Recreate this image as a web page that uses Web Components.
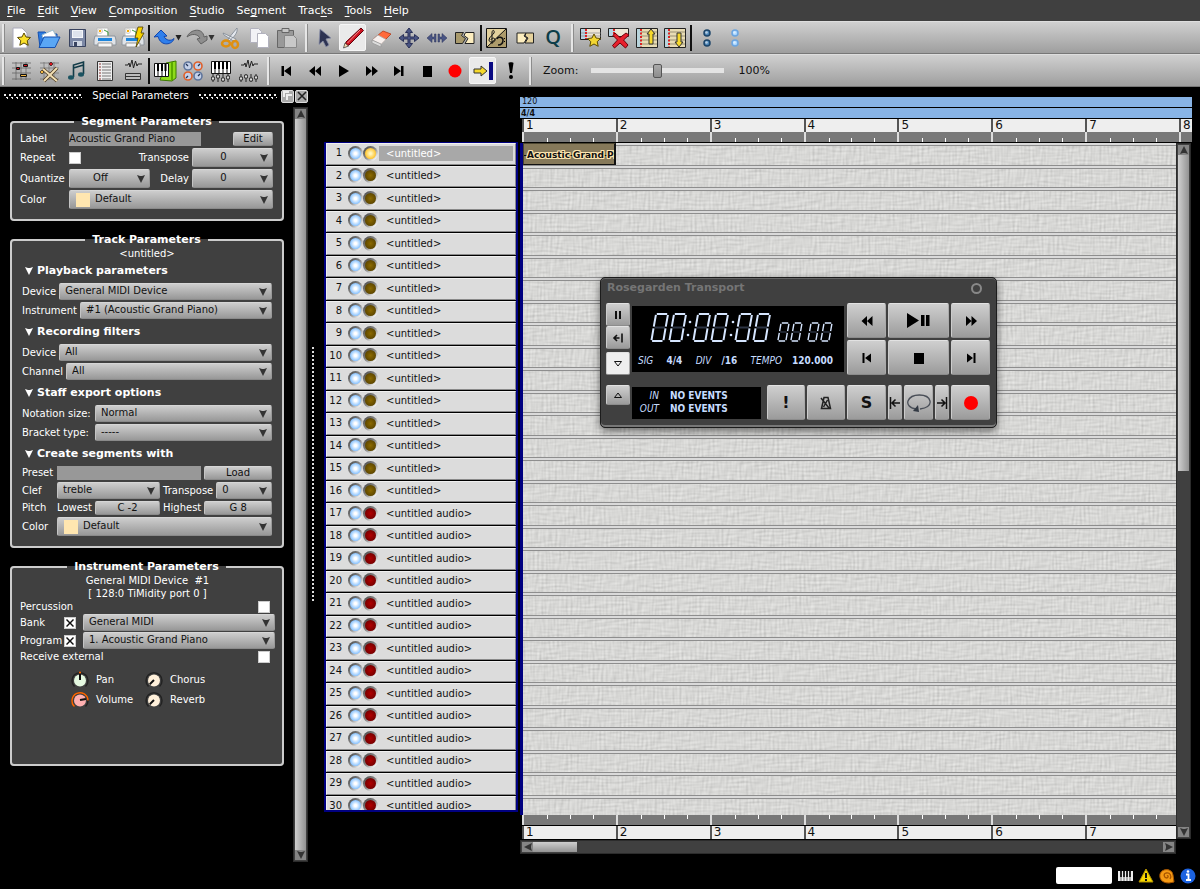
<!DOCTYPE html>
<html lang="en">
<head>
<meta charset="utf-8">
<title>Rosegarden</title>
<style>
  html, body { margin: 0; background: #000; }
  body { font: 10px/14px "DejaVu Sans", sans-serif; color: #fff; }
</style>
</head>
<body>
<rg-app></rg-app>

<script>
const define = (name, html, init) => {
  const tpl = document.createElement('template');
  tpl.innerHTML = html;
  customElements.define(name, class extends HTMLElement {
    constructor() {
      super();
      this.attachShadow({ mode: 'open' });
    }
    connectedCallback() {
      if (this.shadowRoot.childNodes.length) return;
      this.shadowRoot.appendChild(tpl.content.cloneNode(true));
      if (init) init(this, this.shadowRoot);
    }
  });
};
const svg = (body, w = 24, h = 24, extra = '') =>
  `<svg width="${w}" height="${h}" viewBox="0 0 ${w} ${h}" aria-hidden="true" ${extra}>${body}</svg>`;

/* ---------- icons, 24 x 24 ---------- */
const printer = `<path d="M4 2h11v9H4z" fill="#fff" stroke="#bbb"/><circle cx="7" cy="5" r="2.5" fill="#fff" stroke="#ccc"/><circle cx="7" cy="5" r="1.2" fill="#f6a800"/><path d="M11 4l4 2v4" stroke="#3a9a3a" fill="none"/><path d="M2 10h20l1 4v5H1v-5z" fill="#dfe3e8" stroke="#8d949c"/><path d="M5 12h14v3H5z" fill="#1d86dd"/><path d="M5 17h14v4H5z" fill="#f6f6f6" stroke="#999"/>`;
const star = 'l2 4 4.500.5-3.300 3.200 1 4.600-4.200-2.300-4.200 2.300 1-4.600-3.300-3.200 4.500-.5z';
const staffBox = `<path d="M1.500 2.500h21v19h-21z" fill="#e8dcb4" stroke="#222"/><path d="M2 6h20M2 10h20M2 14h20M2 18h20" stroke="#77705a" stroke-width=".7"/><path d="M2 3h4v18H2z" fill="#b8d4dc"/><path d="M6 3v18" stroke="#d22" stroke-width="2" stroke-dasharray="2 1.500"/>`;
const faders = '<path d="M4 15v8M9 15v8M14 15v8M19 15v8" stroke="#222"/><path d="M2.500 18h3v3h-3zM7.500 16h3v3h-3zM12.500 19h3v3h-3zM17.500 17h3v3h-3z" fill="#ddd" stroke="#222" stroke-width=".8"/>';
const wave = (y) => `<path d="M4 ${y}h3l1-2 1 4 2-7 1.500 8 2-7 1.500 5 1-2h4" fill="none" stroke="#222"/>`;
const dialFace = (x, y, c, r) => `<circle cx="${x}" cy="${y}" r="4" fill="#c4d0e8" stroke="${c}" stroke-width="1.600"/><path d="M${x} ${y}l${r}" stroke="#235" stroke-width="1.200"/>`;
const tmOut = (y, c, f) => `<circle cx="12" cy="${y}" r="3" fill="${c}" stroke="${f}" stroke-width="1.500"/><circle cx="11.500" cy="${y - .5}" r="1.300" fill="#fff" opacity=".6"/>`;

const ICONS = {
  new: `<path d="M4 2h9l5 5v15H4z" fill="#fff" stroke="#aab"/><path d="M16 6${star}" transform="translate(-1 1)" fill="#fbe12c" stroke="#5c4b00"/>`,
  open: `<path d="M3 21L1 6h7l2 2h10v4" fill="#2c7be0" stroke="#1551b0"/><path d="M5 9l11-5 4 8H6z" fill="#fff" stroke="#9bc"/><path d="M2 21.500L7 11h16l-5 10.500z" fill="#5aa7f5" stroke="#1551b0"/>`,
  save: `<path d="M4.500 3.500h16v17h-16z" fill="#7d89a6" stroke="#39435f"/><path d="M7 4h11v8H7z" fill="#f4f6fa"/><path d="M8 6h9M8 8h9M8 10h9" stroke="#b6c0d2" stroke-width=".7"/><path d="M8 15h9v5H8z" fill="#cfd6e2"/><path d="M9 16h3v4H9z" fill="#39435f"/>`,
  print: printer,
  preview: printer + `<path d="M17 1h5l-2 6h3l-8 14 2-9h-3z" fill="#f8d200" stroke="#4a3b00" stroke-width=".8"/>`,
  undo: `<path d="M1 11l7-7 6 6-3 .5c2 4 7 5 10 2-1 6-13 9-16-2z" fill="#2f7fec" stroke="#1246ad"/><path d="M22.500 9h6l-3 5.500z" fill="#222"/>`,
  redo: `<path d="M21 14l-6 4-4-5 3-.8C12 8 6 7 1 11 4 3 17 1 18 11l3-1z" fill="#8e8e8e" stroke="#626262"/><path d="M22.500 9h6l-3 5.500z" fill="#333"/>`,
  cut: `<path d="M18 2c1 5-3 9-8 13l-1-2zM4 7l13 6-1 3L5 9z" fill="#e4e8ee" stroke="#7c8590" stroke-width=".8"/><ellipse cx="7" cy="17.500" rx="4" ry="3" fill="none" stroke="#e09010" stroke-width="2.500"/><ellipse cx="16" cy="18.500" rx="3" ry="3.500" fill="none" stroke="#e09010" stroke-width="2.500"/>`,
  copy: `<path d="M3.500 2.500h8l3 3v11h-11z" fill="#f2f2f6" stroke="#b2b2be"/><path d="M10.500 7.500h8l3 3v11h-11z" fill="#fff" stroke="#b2b2be"/>`,
  paste: `<path d="M2.500 4.500h16v17h-16z" fill="#999" stroke="#666"/><path d="M7 2.500h7v4H7z" fill="#c6c6c6" stroke="#666"/><path d="M9.500 9.500h9l3 3v9h-12z" fill="#c8c8c8" stroke="#888"/>`,
  select: `<path d="M7 3l11 9-5 1 3 6-3 2-3-6-4 3.500z" fill="#2d3352" stroke="#8a8fa8" stroke-width=".8"/>`,
  draw: `<path d="M20 2l2.500 2.500L8 19l-4 1.500 1-4.500z" fill="#cf1422" stroke="#5e0008"/><path d="M19 4L6.500 17" stroke="#f58a8a"/><path d="M2.500 22l1.500-5 3.500 3z" fill="#f8dcb0" stroke="#333" stroke-width=".7"/>`,
  erase: `<path d="M3 14L14 5l8 3-10 10z" fill="#ff6a3c" stroke="#b23a18" stroke-width=".8"/><path d="M3 14l6-5 8 4.500-5 5z" fill="#f6f0ee" stroke="#aaa" stroke-width=".8"/><path d="M3 14v3l9 4v-3z" fill="#ddd" stroke="#999" stroke-width=".8"/>`,
  move: `<path d="M12 2l3.500 4.500H13V11h4.500V8.500L22 12l-4.500 3.500V13H13v4.500h2.500L12 22l-3.500-4.500H11V13H6.500v2.500L2 12l4.500-3.500V11H11V6.500H8.500z" fill="#4a5584" stroke="#2a3158"/>`,
  resize: `<path d="M2 12l5-4.500V11h2.500V8H11v8H9.500v-3H7v3.500zM22 12l-5-4.500V11h-2.500V8H13v8h1.500v-3H17v3.500z" fill="#4a5584" stroke="#2a3158" stroke-width=".5"/>`,
  split: `<path d="M2.500 6.500h8l-2 3 4 3-3 5H2.500z" fill="#a99a6c" stroke="#222"/><path d="M12.500 6.500h8.500v11h-9l3-5-4-3z" fill="#fdeec0" stroke="#222"/>`,
  notation: `<path d="M1.500 2.500h20v19h-20z" fill="#e2d09c" stroke="#111"/><path d="M21 3v18H2z" fill="#ad9b6b"/><path d="M2 21L21 3" stroke="#111"/><path d="M7 18V7c0-4 3-3 2 0-1 2-5 4-5 7 0 3 6 3 6 0s-4-2-4 0" fill="none" stroke="#111"/><path d="M12 13c1-3 6-2 6 1 0 3-2 5-5 5" fill="none" stroke="#111" stroke-width="1.500"/><path d="M19 12h1v1h-1zM19 15h1v1h-1z"/>`,
  splitb: `<path d="M4 7h9l-2 3 3 2-3 5H4z" fill="#fdeec0" stroke="#222"/><path d="M13 7h7.500v10H12l3-5-3-2z" fill="#e6d29c" stroke="#222"/>`,
  quant: `<text x="12" y="18" text-anchor="middle" font-family="Open Sans, sans-serif" font-weight="600" font-size="20" fill="#0d3d49">Q</text>`,
  addtrack: `<path d="M1.500 2.500h20v11h-20z" fill="#eee6d4" stroke="#222"/><path d="M2 3h6v10H2z" fill="#b6d4e2"/><path d="M2 7h20M2 10h20" stroke="#888" stroke-width=".7"/><path d="M7 3v10" stroke="#d22" stroke-dasharray="2 1" stroke-width="2"/><path d="M15 8${star}" fill="#f3d631" stroke="#5c4b00"/>`,
  deltrack: `<path d="M1.500 2.500h20v8h-20z" fill="#eee6d4" stroke="#222"/><path d="M2 3h6v7H2z" fill="#b6d4e2"/><path d="M7 3v7" stroke="#d22" stroke-dasharray="2 1" stroke-width="2"/><path d="M8 7l5 4.500L19 7l3 2-5.500 5 4.500 5-2.500 3-5.500-5-5.500 5-2-2.500 5-5.500-4.500-4.500z" fill="#e8202c" stroke="#6e0008"/>`,
  trackup: staffBox + `<path d="M16 3l4 5h-2v10h-4V8h-2z" fill="#f6d92c" stroke="#333"/>`,
  trackdown: staffBox + `<path d="M16 21l4-5h-2V7h-4v9h-2z" fill="#f6d92c" stroke="#333"/>`,
  dotsdark: tmOut(7, '#4d86b8', '#1c4468') + tmOut(17, '#4d86b8', '#1c4468'),
  dotslight: tmOut(7, '#a9d6ff', '#6ba5e0') + tmOut(17, '#a9d6ff', '#6ba5e0'),
  matrix: `<path d="M3 4h19M3 9h19M3 14h19M3 20h19M7 3v18M12 3v18M17 3v18" stroke="#666" stroke-width=".8"/><path d="M7.500 8.500h3v2h-3zM14.500 5.500h4v2h-4z" fill="#d8141c" stroke="#111"/><path d="M11.500 15.500h6v2h-6z" fill="#f3b640" stroke="#111"/>`,
  percussion: `<path d="M3 4h19M3 9h19M3 14h19M3 20h19M7 3v18M12 3v18M17 3v18" stroke="#777" stroke-width=".8"/><path d="M6 10l14 12M20 9L7 22" stroke="#4c3a20" stroke-width="3.500"/><path d="M6 10l14 12M20 9L7 22" stroke="#f2dfb4" stroke-width="2"/><path d="M14 3l2 2-2 2-2-2z" fill="#d8141c" stroke="#111" stroke-width=".6"/><path d="M5 11l2 2-2 2-2-2z" fill="#f3b640" stroke="#111" stroke-width=".6"/>`,
  notes: `<path d="M8.500 18V6l10-3v12M8.500 9l10-3" fill="none" stroke="#123b48" stroke-width="1.600"/><ellipse cx="6" cy="18.500" rx="3" ry="2.200" fill="#1c5361"/><ellipse cx="16" cy="15.500" rx="3" ry="2.200" fill="#1c5361"/>`,
  events: `<path d="M4.500 2.500h15v19h-15z" fill="#eee" stroke="#333"/><path d="M6 5h2M6 8h2M6 11h2M6 14h2M6 17h2M6 20h2" stroke="#833"/><path d="M9 5h9M9 8h9M9 11h9M9 14h9M9 17h9M9 20h9" stroke="#777"/>`,
  audio: wave(6) + `<path d="M4.500 14.500h15v6h-15zM4 17.500h16" fill="#bbb" stroke="#333"/>`,
  banks: `<path d="M13 4l10-2v17l-4 3-12-1z" fill="#8edb1a" stroke="#3d7a00"/><path d="M19 3v18" stroke="#5ba800" stroke-width="2"/><path d="M1.500 4.500h14v13h-14z" fill="#fff" stroke="#111"/><path d="M5 5v12M9 5v12M12.500 5v12" stroke="#111"/><path d="M4 5h2v7H4zM8 5h2v7H8zM11.500 5h2v7h-2z"/>`,
  dials: dialFace(7, 7, '#5f759c', '-2 -2') + dialFace(17, 7, '#e0602a', '2 -2') + dialFace(7, 17, '#e0602a', '-2 2') + dialFace(17, 17, '#5f759c', '2 -2'),
  midimix: `<path d="M2.500 2.500h19v12h-19z" fill="#fff" stroke="#111"/><path d="M6 3v11M10 3v11M14 3v11M18 3v11" stroke="#111"/><path d="M5 3h2v7H5zM9 3h2v7H9zM13 3h2v7h-2zM17 3h2v7h-2z"/>` + faders,
  audiomix: wave(6) + faders,
  start: `<path d="M6.500 7H9v10H6.500zM16 7v10l-7-5z"/>`,
  rew: `<path d="M12 7v10l-6-5zM18 7v10l-6-5z"/>`,
  play: `<path d="M8 6v12l10-6z"/>`,
  ff: `<path d="M7 7v10l6-5zM13 7v10l6-5z"/>`,
  end: `<path d="M14 7h2.500v10H14zM7 7v10l7-5z"/>`,
  stop: `<path d="M8 7h9v11H8z"/>`,
  rec: `<circle cx="12" cy="12" r="6.500" fill="#f00"/>`,
  follow: `<path d="M3 10h7V7l6 5-6 5v-3H3z" fill="#f6d92c" stroke="#333"/><path d="M18 3h4v18h-4z" fill="#0a0a82"/>`,
  panic: `<path d="M9.500 4c0-1 5-1 5 0l-1.500 10h-2z"/><circle cx="12" cy="18" r="2"/>`,
};

/* ---------- styles shared by the forms ---------- */
const tile = (w, h, body) => `url("data:image/svg+xml,%3Csvg xmlns='http://www.w3.org/2000/svg' width='${w}' height='${h}'%3E${body}%3C/svg%3E")`;
const arrow = (fill, d) => tile(8, 8, `%3Cpath d='${d}' fill='%23${fill}'/%3E`);
const dart = 'M0 0L3 1h2L8 0 4 8z';
const formCss = `
  * { box-sizing: border-box; }
  button, select, input { font: inherit; margin: 0; border-radius: 0; }
  select, button.push {
    appearance: none; border: 1px solid; border-color: #d6d6d6 #9a9a9a #8a8a8a #c4c4c4;
    border-radius: 2px; color: #111; background: linear-gradient(#cdcdcd, #989898);
  }
  select {
    height: 17px; padding: 0 18px 1px 5px; flex: 1; min-width: 0;
    background: ${arrow('333', dart)} right 4px center no-repeat, linear-gradient(#cdcdcd, #989898);
  }
  select.tall { height: 19px; }
  select.mid { text-align: center; text-align-last: center; padding-left: 0; }
  select.swatch {
    height: 19px; padding-left: 25px;
    background: ${arrow('333', dart)} right 4px center no-repeat,
      linear-gradient(#ffe6b0, #ffe6b0) 6px center / 14px 14px no-repeat, linear-gradient(#cdcdcd, #989898);
  }
  button.push { height: 14px; padding: 0; line-height: 12px; }
  input[type=text] { appearance: none; height: 14px; padding: 0; border: 0; background: #989898; color: #111; min-width: 0; }
  input[type=checkbox] {
    appearance: none; width: 12px; height: 12px; border: 1px solid #ccc; background: #fff; flex: none;
  }
  input[type=checkbox]:checked {
    background: ${arrow('111', 'M0 1L1 0l3 3 3-3 1 1-3 3 3 3-1 1-3-3-3 3-1-1 3-3z')} center no-repeat #fff;
  }
  .row { display: flex; align-items: center; gap: 3px; margin-bottom: 2px; }
  .row label, .row .cap { white-space: nowrap; }
`;

define('param-group', `
  <style>
    :host { display: block; }
    fieldset { margin: 0; min-width: 0; border: 2px solid #ccc; border-radius: 4px; background: #404040;
      padding: 0 9px 10px 8px; box-sizing: border-box; }
    legend { margin: 0 auto; padding: 0 7px; font: bold 11px/14px "DejaVu Sans", sans-serif; }
  </style>
  <fieldset><legend></legend><slot></slot></fieldset>`,
  (el, root) => { root.querySelector('legend').textContent = el.getAttribute('heading'); });

define('segment-parameters', `
  <style>${formCss}
    :host { display: block; }
    .body { padding-top: 3px; }
    .lead { width: 46px; }
    .half { width: 81px; flex: none; }
    .grow { flex: 1; text-align: right; }
  </style>
  <param-group heading="Segment Parameters"><div class="body">
    <div class="row"><label class="lead" for="l">Label</label><input id="l" type="text" value="Acoustic Grand Piano" style="width:132px"><span class="grow"></span><button class="push" style="width:40px">Edit</button></div>
    <div class="row"><label class="lead" for="r">Repeat</label><input id="r" type="checkbox"><label class="grow" for="t">Transpose</label><select id="t" class="tall mid half"><option>0</option></select></div>
    <div class="row"><label class="lead" for="q">Quantize</label><select id="q" class="tall mid half"><option>Off</option></select><label class="grow" for="d">Delay</label><select id="d" class="tall mid half"><option>0</option></select></div>
    <div class="row" style="margin-bottom:0"><label class="lead" for="c">Color</label><select id="c" class="swatch"><option>Default</option></select></div>
  </div></param-group>`);

define('track-parameters', `
  <style>${formCss}
    :host { display: block; }
    .body { padding: 0 1px 0 2px; }
    .sub { text-align: center; line-height: 14px; margin-bottom: 1px; }
    h3 { margin: 0 0 3px; font: bold 11px/18px "DejaVu Sans", sans-serif; }
    h3 button { appearance: none; border: 0; background: none; color: inherit; font: inherit; padding: 0 0 0 3px; display: flex; align-items: center; gap: 4px; }
    section + section h3 { margin-top: 4px; }
    .wide { width: 70px; }
    .lead { width: 32px; }
    .pair { width: 103px; flex: none; display: flex; gap: 3px; align-items: center; }
    .fill { flex: 1; }
    section:last-child .row:last-child { margin: 0; }
  </style>
  <param-group heading="Track Parameters"><div class="body">
    <div class="sub">&lt;untitled&gt;</div>
    <section><h3><button>Playback parameters</button></h3>
      <div class="row"><label for="pd">Device</label><select id="pd"><option>General MIDI Device</option></select></div>
      <div class="row"><label for="pi">Instrument</label><select id="pi"><option>#1 (Acoustic Grand Piano)</option></select></div>
    </section>
    <section><h3><button>Recording filters</button></h3>
      <div class="row"><label for="rd">Device</label><select id="rd"><option>All</option></select></div>
      <div class="row"><label for="rc">Channel</label><select id="rc"><option>All</option></select></div>
    </section>
    <section><h3><button>Staff export options</button></h3>
      <div class="row"><label class="wide" for="ns">Notation size:</label><select id="ns"><option>Normal</option></select></div>
      <div class="row"><label class="wide" for="bt">Bracket type:</label><select id="bt"><option>-----</option></select></div>
    </section>
    <section><h3><button>Create segments with</button></h3>
      <div class="row"><label class="lead" for="pr">Preset</label><input id="pr" type="text" class="fill"><button class="push" style="width:68px">Load</button></div>
      <div class="row"><label class="lead" for="cl">Clef</label><div class="pair"><select id="cl"><option>treble</option></select></div><label for="tr">Transpose</label><select id="tr"><option>0</option></select></div>
      <div class="row"><span class="cap lead">Pitch</span><div class="pair"><label for="lo">Lowest</label><button id="lo" class="push fill">C -2</button></div><label for="hi">Highest</label><button id="hi" class="push fill">G 8</button></div>
      <div class="row"><label class="lead" for="co">Color</label><select id="co" class="swatch"><option>Default</option></select></div>
    </section>
  </div></param-group>`,
  (el, root) => root.querySelectorAll('h3 button').forEach(b =>
    b.insertAdjacentHTML('afterbegin', svg('<path d="M0 0l3 1h2l3-1-4 8z" fill="#fff"/>', 8, 8))));

define('dial-knob', `
  <style>:host { display: block; width: 20px; height: 20px; } svg { display: block; }</style><span></span>`,
  (el, root) => {
    const a = +el.getAttribute('angle') * Math.PI / 180, arc = el.getAttribute('arc');
    const x = 10 + 6 * Math.sin(a), y = 10 - 6 * Math.cos(a);
    root.querySelector('span').innerHTML = svg(
      `<path d="M4.500 16.500A8 8 0 1 1 15.500 16.500" fill="none" stroke="#222" stroke-width="1.500"/>
       ${arc ? `<path d="${arc}" fill="none" stroke="#f60" stroke-width="1.500"/>` : ''}
       <circle cx="10" cy="10.500" r="6" fill="${el.getAttribute('face')}"/>
       <path d="M10 10L${x} ${y}" stroke="#111" stroke-width="2"/>`, 20, 20);
  });

define('instrument-parameters', `
  <style>${formCss}
    :host { display: block; }
    .body { min-height: 180px; margin-right: -2px; }
    .sub { text-align: center; line-height: 13px; white-space: pre; }
    .line { display: flex; align-items: center; justify-content: space-between; height: 14px; padding-right: 5px; }
    .row { gap: 1px; margin-bottom: 1px; }
    .row label { width: 43px; }
    select { margin-left: 6px; }
    .knobs { display: grid; grid-template-columns: 20px 42px 20px 60px; column-gap: 6px; margin: 6px 0 0 50px; align-items: center; }
  </style>
  <param-group heading="Instrument Parameters"><div class="body">
    <div class="sub">General MIDI Device  #1</div>
    <div class="sub">[ 128:0 TiMidity port 0 ]</div>
    <div class="line"><label for="pe">Percussion</label><input id="pe" type="checkbox"></div>
    <div class="row"><label for="bk">Bank</label><input type="checkbox" id="bk" checked><select aria-label="Bank"><option>General MIDI</option></select></div>
    <div class="row"><label for="pg">Program</label><input type="checkbox" id="pg" checked><select aria-label="Program"><option>1. Acoustic Grand Piano</option></select></div>
    <div class="line"><label for="re">Receive external</label><input id="re" type="checkbox"></div>
    <div class="knobs">
      <dial-knob angle="0" face="#e4f8e0" arc="M9 2.500h2"></dial-knob><span>Pan</span>
      <dial-knob angle="225" face="#fff0da"></dial-knob><span>Chorus</span>
      <dial-knob angle="80" face="#ffb0b0" arc="M4.500 16.500A8 8 0 1 1 18 10.500"></dial-knob><span>Volume</span>
      <dial-knob angle="225" face="#fff0da"></dial-knob><span>Reverb</span>
    </div>
  </div></param-group>`);

/* ---------- scroll bar ---------- */
define('scroll-bar', `
  <style>
    :host { display: flex; flex-direction: column; box-sizing: border-box; width: 15px; background: #404040; border: 1px solid #2c2c2c; padding: 1px; }
    :host([horizontal]) { flex-direction: row; width: auto; height: 14px; }
    button { appearance: none; flex: none; width: 11px; height: 10px; padding: 0; border: 0; background: #858585; display: grid; place-items: center; }
    .lane { flex: 1; min-height: 0; min-width: 0; }
    .thumb { height: var(--size, 100%); background: linear-gradient(90deg, #d0d0d0, #929292); }
    :host([horizontal]) .thumb { width: var(--size, 100%); height: 100%; background: linear-gradient(#cfcfcf, #939393); }
  </style>
  <button aria-label="Back"></button><div class="lane"><div class="thumb"></div></div><button aria-label="Forward"></button>`,
  (el, root) => {
    const [a, b] = root.querySelectorAll('button');
    const h = el.hasAttribute('horizontal');
    a.innerHTML = svg(`<path d="${h ? 'M8 0L7 3v2l1 3-8-4z' : 'M0 8l3-1h2l3 1-4-8z'}" fill="#333"/>`, 8, 8);
    b.innerHTML = svg(`<path d="${h ? 'M0 0l1 3v2L0 8l8-4z' : 'M0 0l3 1h2l3-1-4 8z'}" fill="#333"/>`, 8, 8);
  });

/* ---------- dock on the left ---------- */
define('param-dock', `
  <style>
    :host { display: flex; flex-direction: column; width: 308px; min-height: 0; }
    header { display: flex; align-items: center; height: 18px; padding-left: 4px; gap: 10px; }
    i { flex: 1; height: 5px; background: ${tile(5, 5, "%3Cpath d='M0 0h2v2H0zM3 3h1v2H3zM3 3h-1v1h1z' fill='%23eee'/%3E")}; }
    .btns { display: flex; gap: 1px; margin-left: -6px; }
    .btns button { appearance: none; width: 13px; height: 13px; padding: 0; border: 1px solid #ddd; border-radius: 2px; background: #aaa; display: grid; place-items: center; }
    .pane { flex: 1; min-height: 0; display: flex; justify-content: space-between; padding-top: 2px; }
    .stack { flex: 1; display: flex; flex-direction: column; gap: 12px; padding: 8px 9px 0 10px; overflow: hidden; }
  </style>
  <header><i></i><span>Special Parameters</span><i></i>
    <div class="btns"><button aria-label="Float">${svg('<path d="M1 6V1h5M4 9V4h5" fill="none" stroke="#eee" stroke-width="2"/>', 10, 10)}</button><button aria-label="Close">${svg('<path d="M1 1l8 8M9 1L1 9" stroke="#222" stroke-width="1.600"/>', 10, 10)}</button></div>
  </header>
  <div class="pane">
    <div class="stack"><segment-parameters></segment-parameters><track-parameters></track-parameters><instrument-parameters></instrument-parameters></div>
    <scroll-bar></scroll-bar>
  </div>`);

/* ---------- menu and tool bars ---------- */
define('menu-bar', `
  <style>
    :host { display: block; background: #404040; height: 21px; }
    nav { display: flex; padding-left: 1px; font-size: 11px; line-height: 22px; }
    a { color: #fff; text-decoration: none; padding: 0 6px; }
    u { text-underline-offset: 2px; }
  </style>
  <nav><a href="#"><u>F</u>ile</a><a href="#"><u>E</u>dit</a><a href="#"><u>V</u>iew</a><a href="#"><u>C</u>omposition</a><a href="#"><u>S</u>tudio</a><a href="#">Se<u>g</u>ment</a><a href="#">Trac<u>k</u>s</a><a href="#"><u>T</u>ools</a><a href="#"><u>H</u>elp</a></nav>`);

define('tool-button', `
  <style>
    :host { display: block; width: 28px; }
    :host([drop]) { width: 33px; }
    button { appearance: none; box-sizing: border-box; width: 100%; height: 27px; padding: 0; border: 1px solid transparent; background: none; display: grid; place-items: center; }
    :host([on]) button { width: 27px; background: #eaeaea; border-color: #f6f6f6; border-radius: 2px; }
    svg { overflow: visible; }
  </style><button></button>`,
  (el, root) => {
    const b = root.querySelector('button'), n = el.getAttribute('icon');
    b.setAttribute('aria-label', n);
    b.innerHTML = svg(ICONS[n], el.hasAttribute('drop') ? 29 : 24, 24);
  });

define('tool-sep', `
  <style>
    :host { display: flex; justify-content: center; width: 4px; height: 26px; }
    :host::before { content: ""; width: 2px; background: #111; }
    :host([grip]) { width: 10px; height: 28px; }
    :host([grip])::before { background: #e6e6e6; border-right: 1px solid #8c8c8c; }
    :host([first]) { width: 7px; }
  </style>`);

define('tool-bar', `
  <style>
    :host { display: flex; align-items: center; height: 33px; box-sizing: border-box; color: #111;
      background: linear-gradient(#d0d0d0, #9e9e9e); border-top: 1px solid #dedede; border-bottom: 1px solid #777; }
  </style><slot></slot>`);

define('zoom-control', `
  <style>
    :host { display: flex; align-items: center; font-size: 11px; padding-left: 8px; }
    input { appearance: none; width: 133px; height: 16px; margin: 0 14px 0 13px; background: linear-gradient(#e4e4e4, #e4e4e4) center / 100% 5px no-repeat; }
    input::-webkit-slider-thumb { appearance: none; width: 9px; height: 14px; border: 1px solid #555; border-radius: 2px; background: linear-gradient(#aaa, #8c8c8c); }
  </style>
  <label for="z">Zoom:</label><input id="z" type="range" min="0" max="100" value="50"><output for="z">100%</output>`);

/* ---------- track headers ---------- */
define('track-list', `
  <style>
    :host { display: block; box-sizing: border-box; border: 2px solid #000080; border-top-width: 1px; overflow: hidden; background: #000; color: #111; }
    ol { margin: 0; padding: 0; list-style: none; height: 675px; display: grid; grid-template-rows: repeat(30, 1fr); }
    li { display: flex; align-items: center; box-sizing: border-box; border: 1px solid; border-color: #f0f0f0 #8a8a8a #8a8a8a #f0f0f0;
      background: #dcdcdc; margin-bottom: 1px; min-height: 0; padding-bottom: 1px; }
    .n { width: 15px; text-align: right; margin-right: 6px; line-height: 14px; }
    button { appearance: none; box-sizing: border-box; width: 15px; height: 15px; padding: 0; border: 0; border-radius: 50%; background: linear-gradient(135deg, #555 15%, #8c8c8c 50%, #f4f4f4 85%); display: grid; place-items: center; }
    button::before { content: ""; width: 11px; height: 11px; border-radius: 50%; }
    .mute::before { background: radial-gradient(#fff 15%, #7dbdff 75%); }
    .rec::before { background: radial-gradient(#8c6a00, #4a3800); }
    .audio .rec::before { background: radial-gradient(#b00000, #600000); }
    .sel .rec::before { background: radial-gradient(#fff6c0 10%, #ffc020 75%); }
    .name { flex: 1; margin: 0 2px 0 1px; padding-left: 7px; line-height: 15px; white-space: nowrap; }
    .sel .name { background: #a8a8a8; color: #fff; }
  </style><ol></ol>`,
  (el, root) => {
    root.querySelector('ol').innerHTML = Array.from({ length: 30 }, (_, i) =>
      `<li class="${i === 0 ? 'sel' : i > 15 ? 'audio' : ''}"><span class="n">${i + 1}</span><button class="mute" aria-label="Mute ${i + 1}"></button><button class="rec" aria-label="Record ${i + 1}"></button><span class="name">&lt;untitled${i > 15 ? ' audio' : ''}&gt;</span></li>`).join('');
  });

/* ---------- bar ruler ---------- */
define('bar-ruler', `
  <style>
    :host { display: block; overflow: hidden; color: #111; padding-left: 2px; }
    .bars { display: grid; grid-template-columns: repeat(7, 1fr) 13px; }
    :host([bottom]) .bars { width: calc(100% + 16px); }
    .bar { display: flex; flex-direction: column; }
    b { font: 12px/13px "DejaVu Sans", sans-serif; height: 13px; background: #eee; padding-left: 2px; border-left: 2px solid #555; }
    .ticks { height: 10px; background: #787878; border-left: 2px solid #ddd; display: grid; grid-template-columns: repeat(4, 1fr); align-items: end; }
    .ticks s { height: 4px; }
    .ticks s + s { border-left: 1px solid #fff; }
    :host([bottom]) .bar { flex-direction: column-reverse; gap: 1px; }
    :host([bottom]) .ticks { align-items: start; }
  </style><div class="bars"></div>`,
  (el, root) => {
    root.querySelector('.bars').innerHTML = (el.hasAttribute('bottom') ? [1, 2, 3, 4, 5, 6, 7] : [1, 2, 3, 4, 5, 6, 7, 8]).map(n =>
      `<div class="bar"><b>${n}</b><div class="ticks">${n < 8 ? '<s></s><s></s><s></s><s></s>' : ''}</div></div>`).join('');
  });

/* ---------- segment canvas ---------- */
define('segment-canvas', `
  <style>
    :host { display: block; position: relative; overflow: hidden; background: #d7d7d5; border-left: 3px solid #000080; min-height: 0; }
    .paper { position: absolute; inset: 0; width: 100%; height: 100%; }
    .rows { position: relative; height: 675px; display: grid; grid-template-rows: repeat(30, 1fr); }
    .rows > div { background: linear-gradient(#dadada 0 2px, #8e8e8e 2px 3px, transparent 3px calc(100% - 1px), #8e8e8e calc(100% - 1px)); }
    .seg { box-sizing: border-box; width: 93px; height: 22px; border: 1px solid #4a4430; border-right: 2px solid #111; border-bottom-color: #111; overflow: hidden; white-space: nowrap; padding-left: 3px;
      background: linear-gradient(#111, #111) 0 11px / 100% 1px no-repeat, #86795a;
      font: bold 9px/22px "DejaVu Sans", sans-serif; color: #111;
      text-shadow: 1px 0 #ffe6b0, -1px 0 #ffe6b0, 0 1px #ffe6b0, 0 -1px #ffe6b0, 1px 1px #ffe6b0, -1px -1px #ffe6b0, 1px -1px #ffe6b0, -1px 1px #ffe6b0; }
  </style>
  <svg class="paper" aria-hidden="true">
    <filter id="weave" x="0" y="0" width="100%" height="100%" color-interpolation-filters="sRGB">
      <feTurbulence type="fractalNoise" baseFrequency=".07 .45" numOctaves="1" seed="4" result="weft"/>
      <feTurbulence type="fractalNoise" baseFrequency=".45 .07" numOctaves="1" seed="9" result="warp"/>
      <feComposite in="weft" in2="warp" operator="arithmetic" k2=".5" k3=".5" result="n"/>
      <feDiffuseLighting in="n" surfaceScale=".55" diffuseConstant="1.15" lighting-color="#d8d8d6"><feDistantLight azimuth="225" elevation="60"/></feDiffuseLighting>
    </filter>
    <rect width="100%" height="100%" filter="url(#weave)"/>
  </svg>
  <div class="rows"></div>`,
  (el, root) => {
    root.querySelector('.rows').innerHTML = Array.from({ length: 30 }, (_, i) =>
      `<div>${i ? '' : '<div class="seg">Acoustic Grand Piano</div>'}</div>`).join('');
  });

/* ---------- transport ---------- */
define('seg-display', `
  <style>:host { display: block; } svg { display: block; }</style><div role="img" aria-label="00:00:00 00 00"></div>`,
  (el, root) => {
    const slant = 5 / 29;
    // one zero: six lit strokes with small breaks at the joints, and the unlit middle bar
    const digit = (x, y, w, h, sw) => {
      const p = (dx, dy) => `${(x + dx - dy * slant).toFixed(1)} ${(y + dy).toFixed(1)}`;
      const m = h / 2, g = .8;
      return `<path d="M${p(g, m)}L${p(w - g, m)}" stroke="#2c3444" stroke-width="${sw}"/><path d="M${p(g, 0)}L${p(w - g, 0)}M${p(0, g)}L${p(0, m - g)}M${p(w, g)}L${p(w, m - g)}M${p(0, m + g)}L${p(0, h - g)}M${p(w, m + g)}L${p(w, h - g)}M${p(g, h)}L${p(w - g, h)}" stroke="#d6e6ff" stroke-width="${sw}"/>`;
    };
    const big = [24, 42, 66, 84, 108, 126].map(x => digit(x, 8, 12, 27, 2)).join('');
    const small = [149, 162, 179, 192].map(x => digit(x, 17, 8, 18, 1.4)).join('');
    const dots = [58, 101].map(x => `<circle cx="${x}" cy="16" r="1.300"/><circle cx="${x - 2}" cy="29" r="1.300"/>`).join('');
    root.querySelector('div').innerHTML = svg(`<g fill="none">${big}${small}</g><g fill="#d6e6ff">${dots}</g>`, 212, 44);
  });

define('transport-window', `
  <style>
    :host { display: block; box-sizing: border-box; width: 397px; border: 1px solid #1c1c1c; border-radius: 5px; background: #404040;
      box-shadow: inset 0 1px #666, inset 0 -2px #777, 0 3px 8px #0008; padding: 0 6px 7px 5px; }
    header { display: flex; justify-content: space-between; align-items: center; height: 20px; margin-bottom: 5px; padding: 0 8px 0 1px; font: bold 11px/20px "DejaVu Sans", sans-serif; color: #757575; }
    .ring { appearance: none; padding: 0; box-sizing: border-box; width: 11px; height: 11px; border: 2px solid #888; border-radius: 50%; background: none; }
    .line { display: flex; gap: 2px; align-items: flex-start; }
    .line + .line { margin-top: 10px; }
    .side { display: flex; flex-direction: column; width: 24px; }
    .lcd { box-sizing: border-box; background: #000; color: #c6dcff; font: 10px/13px "DejaVu Sans Condensed", "DejaVu Sans", sans-serif; }
    .main { width: 212px; height: 66px; margin: 3px 1px 0 0; }
    .info { display: flex; justify-content: space-between; padding: 4px 11px 0 6px; }
    .info span { display: flex; gap: 10px; }
    .midi { width: 129px; height: 32px; margin: 2px 4px 0 0; padding: 2px 0 0 6px; display: grid; grid-template-columns: 21px 1fr; column-gap: 11px; align-content: start; }
    .midi em { text-align: right; }
    .pad { display: grid; grid-template: 35px 35px / 39px 61px 39px; gap: 2px; }
    button.k { appearance: none; box-sizing: border-box; padding: 0; border: 1px solid; border-color: #e2e2e2 #aaa #8c8c8c #ccc; border-radius: 2px; background: linear-gradient(#cfcfcf, #9b9b9b); display: grid; place-items: center;
      color: #111; font: bold 16px/20px "DejaVu Sans", sans-serif; height: 35px; }
    .side button.k { height: 23px; }
    .side button.lit { background: #eee; margin-top: 3px; }
    .side button.low { height: 20px; }
    .w38 { width: 38px; } .w39 { width: 39px; } .w29 { width: 29px; } .w14 { width: 14px; }
  </style>
  <header><span>Rosegarden Transport</span><button class="ring" aria-label="Close"></button></header>
  <div class="line">
    <div class="side">
      <button class="k" aria-label="Pause">${svg('<path d="M3 2h2v8H3zM7 2h2v8H7z" fill="#111"/>', 12, 12)}</button>
      <button class="k" aria-label="Jump">${svg('<path d="M10 1.500v9M1.500 6h6M5 3L2 6l3 3" fill="none" stroke="#111" stroke-width="1.600"/>', 12, 12)}</button>
      <button class="k lit" aria-label="Less">${svg('<path d="M2.500 3.500h7L6 8z" fill="none" stroke="#111"/>', 12, 12)}</button>
    </div>
    <div class="lcd main"><seg-display></seg-display>
      <div class="info"><span><em>SIG</em><b>&nbsp;4/4</b></span><span><em>DIV</em><b>/16</b></span><span><em>TEMPO</em><b>120.000</b></span></div>
    </div>
    <div class="pad">
      <button class="k" aria-label="Rewind">${svg('<path d="M12 7v10l-5.500-5zM17.500 7v10L12 12z"/>')}</button>
      <button class="k" aria-label="Play">${svg('<path d="M0 2v15l12-7.500zM14 4h3.500v11H14zM19 4h3.500v11H19z"/>', 24, 19)}</button>
      <button class="k" aria-label="Fast forward">${svg('<path d="M7 7v10l5.500-5zM12.500 7v10l5.500-5z"/>')}</button>
      <button class="k" aria-label="To start">${svg('<path d="M7.500 7h2v10h-2zM16 7.500v9L10 12z"/>')}</button>
      <button class="k" aria-label="Stop">${svg('<path d="M7 7h10v11H7z"/>')}</button>
      <button class="k" aria-label="To end">${svg('<path d="M14.500 7h2v10h-2zM8 7.500v9l6-4.500z"/>')}</button>
    </div>
  </div>
  <div class="line">
    <div class="side"><button class="k low" aria-label="More">${svg('<path d="M2.500 8.500h7L6 4z" fill="none" stroke="#111"/>', 12, 12)}</button></div>
    <div class="lcd midi"><em>IN</em><b>NO EVENTS</b><em>OUT</em><b>NO EVENTS</b></div>
    <button class="k w38">!</button>
    <button class="k w38" aria-label="Metronome">${svg('<path d="M7.500 17.500L10 6.500h4l2.500 11zM7 7l8 10M13.500 9l-4 7" fill="none" stroke="#222" stroke-width="1.500"/>')}</button>
    <button class="k w39">S</button>
    <button class="k w14" aria-label="Loop start">${svg('<path d="M1.500 0v12M3 6h8M6.500 2.500L3 6l3.500 3.500" fill="none" stroke="#111" stroke-width="1.500"/>', 12, 12)}</button>
    <button class="k w29" aria-label="Loop">${svg('<path d="M9 16C2 15 0 11 1 8c3-8 20-8 22 0 1 5-4 7-10 8" fill="none" stroke="#4a4f58" stroke-width="1.300"/><path d="M6 18l5-6 1 7z" fill="#333a44"/>', 24, 20)}</button>
    <button class="k w14" aria-label="Loop end">${svg('<path d="M10.500 0v12M1 6h8M5.500 2.500L9 6 5.500 9.500" fill="none" stroke="#111" stroke-width="1.500"/>', 12, 12)}</button>
    <button class="k w39" aria-label="Record">${svg('<circle cx="12" cy="12" r="7" fill="#f00"/>')}</button>
  </div>`);

/* ---------- editor and status ---------- */
define('track-editor', `
  <style>
    :host { display: grid; grid-template-columns: 194px 1fr 16px; grid-template-rows: auto minmax(0, 1fr) auto auto; column-gap: 0; padding: 10px 8px 8px 0; min-width: 0; min-height: 0; }
    .top { grid-column: 2 / 4; margin-left: 2px; }
    .strip { height: 10px; background: #88b4e6; color: #111; margin-bottom: 1px; padding-left: 2px; font-size: 8px; line-height: 9px; }
    .strip.sig { font-weight: bold; font-size: 8px; line-height: 11px; padding-left: 1px; }
    track-list { grid-column: 1; grid-row: 2; margin: -1px 0 3px; }
    segment-canvas { grid-column: 2; grid-row: 2; margin: 0 0 0 2px; }
    .top bar-ruler { margin-bottom: 1px; }
    .v { grid-column: 3; grid-row: 2 / 4; --size: 47%; }
    bar-ruler[bottom] { grid-column: 2; grid-row: 3; margin-left: 2px; }
    .h { grid-column: 2; grid-row: 4; margin: 1px 0 0 2px; --size: 7%; }
  </style>
  <div class="top"><div class="strip">120</div><div class="strip sig">4/4</div><bar-ruler></bar-ruler></div>
  <track-list></track-list><segment-canvas></segment-canvas><scroll-bar class="v"></scroll-bar>
  <bar-ruler bottom></bar-ruler><scroll-bar class="h" horizontal></scroll-bar>`);

define('status-bar', `
  <style>
    :host { display: flex; align-items: center; justify-content: flex-end; gap: 5px; height: 27px; padding-right: 4px; }
    .meter { width: 56px; height: 17px; background: #fff; border-radius: 2px; }
    svg { display: block; }
  </style>
  <div class="meter"></div>
  ${svg('<path d="M1 3h15v10H1z" fill="#eee"/><path d="M4 3v10M7 3v10M10 3v10M13 3v10" stroke="#222" stroke-width=".6"/><path d="M3 3h2v6H3zM6 3h2v6H6zM9 3h2v6H9zM12 3h2v6h-2z" fill="#222"/>', 16, 16)}
  ${svg('<path d="M8 1l7 13H1z" fill="#f8d800" stroke="#b09000"/><path d="M8 5v5M8 11v2" stroke="#111" stroke-width="2"/>', 16, 16)}
  ${svg('<path d="M1 6c2-6 12-6 13 1l1 7-5 1C3 15 0 11 1 6z" fill="#f59a14" stroke="#a65400"/><path d="M8 8c1-1 2 1 0 2-3 0-4-4-1-5 4-1 6 3 4 6" fill="none" stroke="#a65400" stroke-width="1.300"/>', 16, 16)}
  ${svg('<circle cx="8" cy="8" r="7.500" fill="#1c62e0"/><path d="M6 6.500h2.500v5.500M6 12h5" fill="none" stroke="#fff" stroke-width="1.800"/><circle cx="8" cy="3.500" r="1.300" fill="#fff"/>', 16, 16)}`);

const tb = names => names.split(' ').map(n =>
  n === '|' ? '<tool-sep></tool-sep>' : n === '[' ? '<tool-sep grip first></tool-sep>' : n === '#' ? '<tool-sep grip></tool-sep>'
    : `<tool-button icon="${n.replace(/[+*]/, '')}"${n.endsWith('+') ? ' drop' : ''}${n.endsWith('*') ? ' on' : ''}></tool-button>`).join('');

define('rg-app', `
  <style>
    :host { display: flex; flex-direction: column; height: 100vh; position: relative; overflow: hidden; }
    main { flex: 1; min-height: 0; display: grid; grid-template-columns: 308px 16px minmax(0, 1fr); }
    .split { align-self: center; width: 2px; height: 256px; margin-left: 4px; background: linear-gradient(#ddd 50%, transparent 50%) 0 0 / 2px 4px; }
    transport-window { position: absolute; left: 50%; top: 277px; }
  </style>
  <menu-bar></menu-bar>
  <tool-bar>${tb('[ new open save print preview | undo+ redo+ cut copy paste # select draw* erase move resize split | notation splitb quant # addtrack deltrack trackup trackdown | dotsdark dotslight')}</tool-bar>
  <tool-bar>${tb('[ matrix percussion notes events audio | banks dials midimix audiomix # start rew play ff end stop rec follow* panic #')}<zoom-control></zoom-control></tool-bar>
  <main><param-dock></param-dock><div class="split"></div><track-editor></track-editor></main>
  <status-bar></status-bar>
  <transport-window></transport-window>`);
</script>
</body>
</html>
